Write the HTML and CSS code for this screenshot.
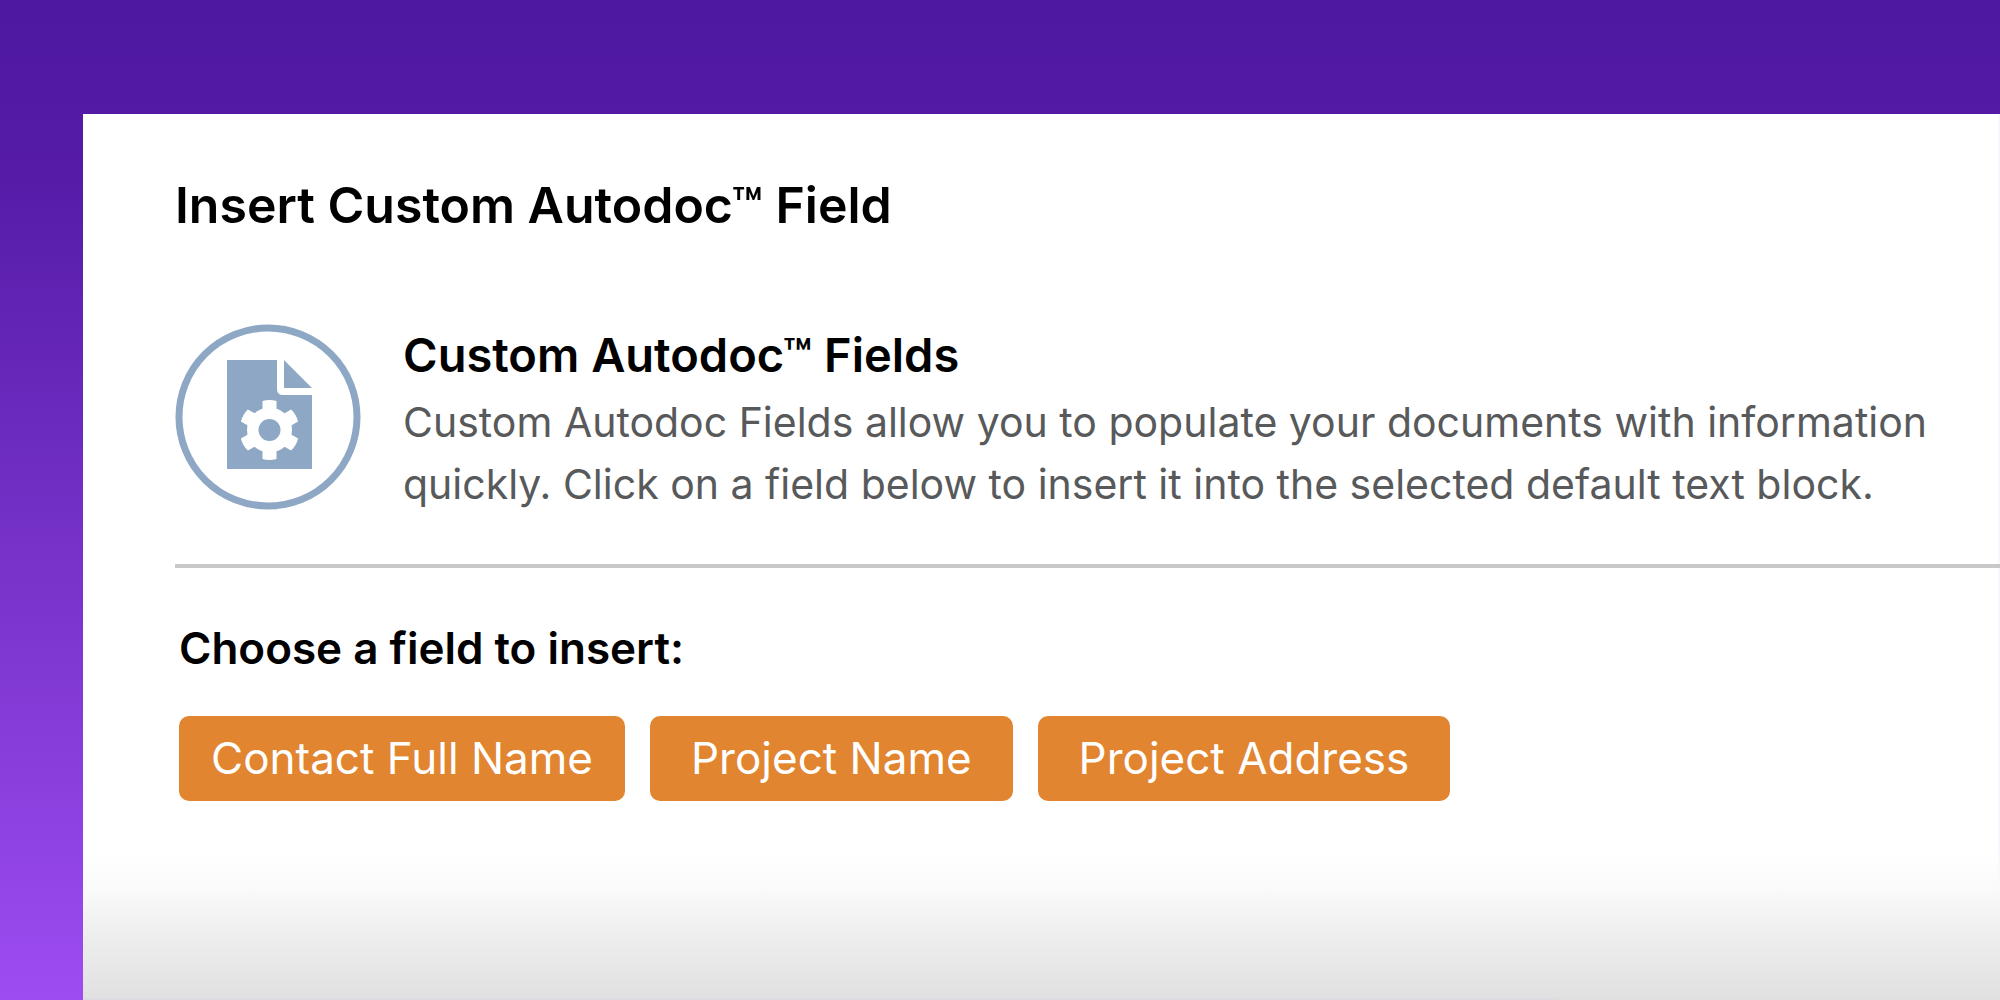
FILE: index.html
```html
<!DOCTYPE html>
<html lang="en">
<head>
<meta charset="utf-8">
<meta name="viewport" content="width=device-width, initial-scale=1">
<title>Insert Custom Autodoc™ Field</title>
<link rel="stylesheet" href="styles.css">
</head>
<body class="page">
<main class="panel">
  <h1 class="panel-title">Insert Custom Autodoc™ Field</h1>
  <section class="intro">
    <svg class="intro-icon" viewBox="0 0 186 186" aria-hidden="true">
      <circle class="icon-ring" cx="93" cy="93" r="89"/>
      <path class="icon-shape" d="M52 36H102V65Q102 71 108 71H137V145H52ZM109 36L137 64H109Z"/>
      <g class="icon-gear" transform="translate(94.5 106)">
        <circle r="22.5"/>
        <path id="tooth" d="M-7 -19V-29Q0 -31 7 -29V-19ZM-7 19V29Q0 31 7 29V19Z"/>
        <use href="#tooth" transform="rotate(60)"/>
        <use href="#tooth" transform="rotate(120)"/>
      </g>
      <circle class="icon-shape" cx="94.5" cy="106" r="11"/>
    </svg>
    <div class="intro-text">
      <h2 class="intro-title">Custom Autodoc™ Fields</h2>
      <p class="intro-copy">Custom Autodoc Fields allow you to populate your documents with information quickly. Click on a field below to insert it into the selected default text block.</p>
    </div>
  </section>
  <section class="chooser">
    <h3 class="chooser-title">Choose a field to insert:</h3>
    <div class="fields">
      <button class="field" type="button">Contact Full Name</button>
      <button class="field field-wide" type="button">Project Name</button>
      <button class="field field-wide" type="button">Project Address</button>
    </div>
  </section>
</main>
</body>
</html>
```
FILE: styles.css
```css
* { box-sizing: border-box; }

.page {
  display: flex;
  min-height: 100vh;
  margin: 0;
  padding: 114px 0 0 83px;
  background: linear-gradient(#4e18a0 0%, #561ca8 18%, #9d4cf1 100%);
  font-family: Inter, "Liberation Sans", sans-serif;
  color: #000;
}

.panel {
  flex: 1;
  padding: 62px 0 160px 92px;
  background:
    linear-gradient(#dcdbe2, #dcdbe2) left bottom / 77% 2px no-repeat,
    linear-gradient(to top, #e0e0e0, #ededed 60px, #fafafa 110px, transparent 150px) no-repeat,
    linear-gradient(#f8f7ff, #f8f7ff) right / 2px 100% no-repeat,
    #fff;
}

h1, h2, h3, p { margin: 0; }

.panel-title {
  font-size: 50px;
  font-weight: 600;
  line-height: 58px;
}

.intro {
  display: flex;
  gap: 42px;
  padding: 90px 0 49px;
  border-bottom: 4px solid #c8c8c8;
}

.intro-icon {
  flex: none;
  width: 186px;
  height: 186px;
}

.icon-ring { fill: none; stroke: #8da7c4; stroke-width: 7; }
.icon-shape { fill: #8da7c4; }
.icon-gear { fill: #fff; }

.intro-title {
  padding-top: 3px;
  font-size: 47px;
  font-weight: 600;
  line-height: 56px;
}

.intro-copy {
  max-width: 1560px;
  padding-top: 8px;
  font-size: 41px;
  line-height: 62px;
  color: #58595b;
}

.chooser { padding: 52px 4px 0; }

.chooser-title {
  font-size: 44px;
  font-weight: 600;
  line-height: 56px;
}

.fields {
  display: flex;
  flex-wrap: wrap;
  gap: 25px;
  padding-top: 40px;
}

.field {
  padding: 14px 32px;
  border: 0;
  border-radius: 10px;
  background: #e28530;
  color: #fff;
  font: 400 44px/57px Inter, "Liberation Sans", sans-serif;
}

.field-wide { padding: 14px 41px; }
```
